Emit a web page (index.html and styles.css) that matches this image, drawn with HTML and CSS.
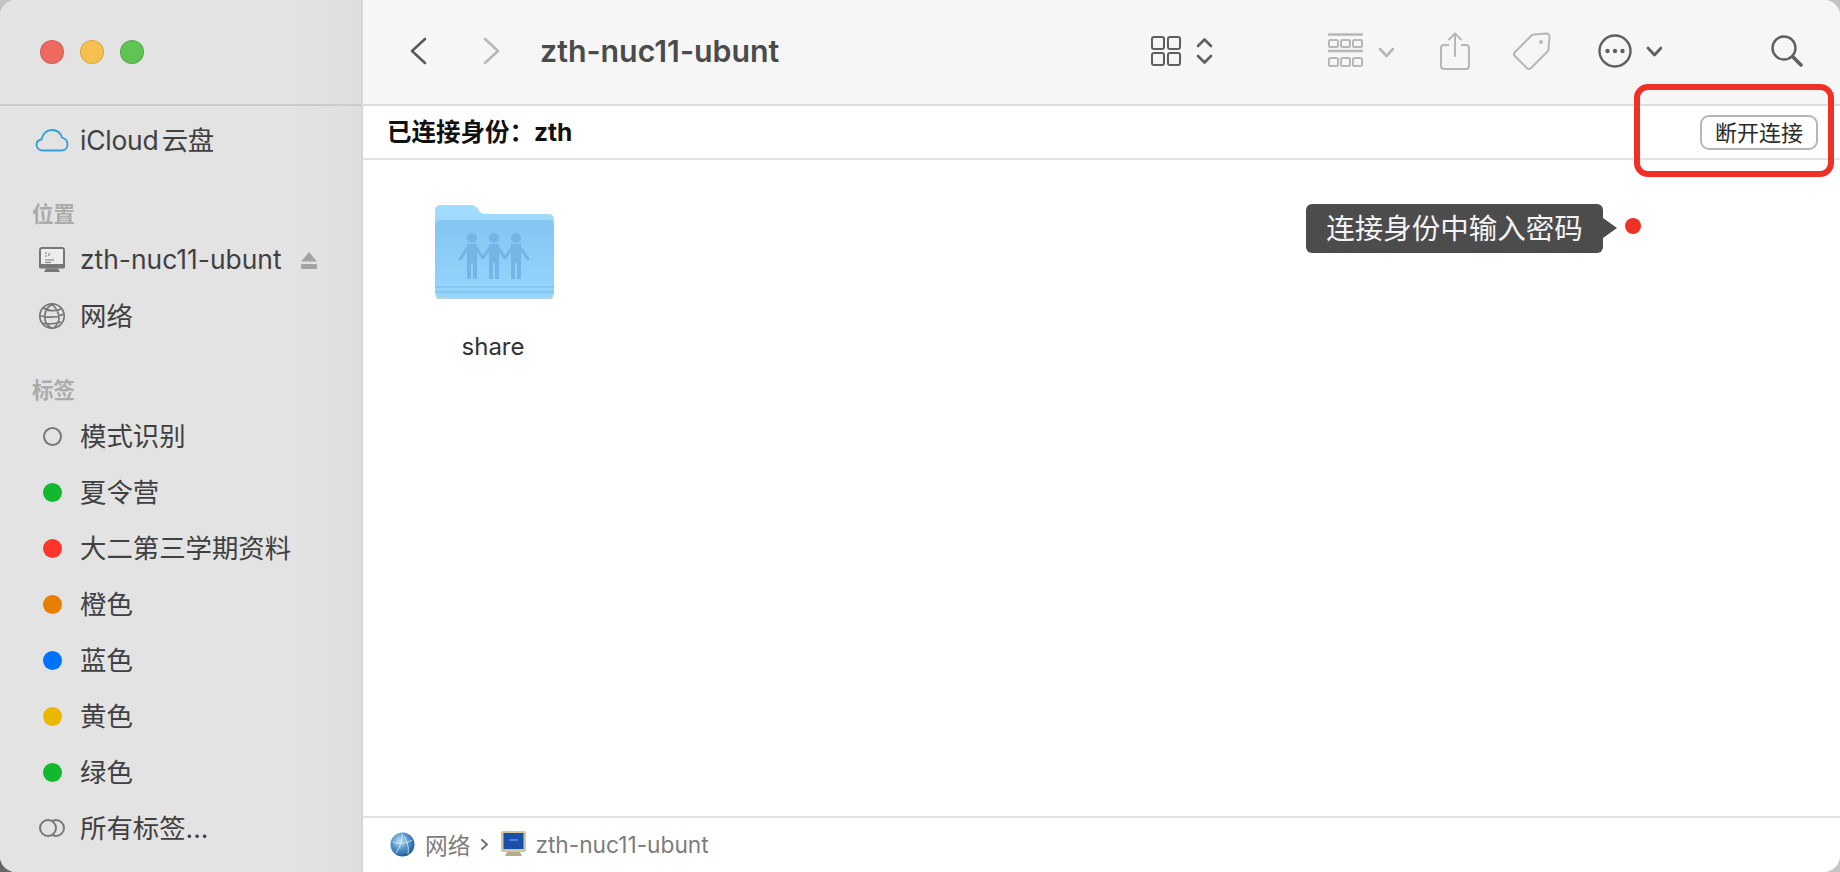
FILE: index.html
```html
<!DOCTYPE html>
<html lang="zh-CN">
<head>
<meta charset="utf-8">
<title>zth-nuc11-ubunt</title>
<link rel="stylesheet" href="styles.css">
</head>
<body>
<div class="window">
  <aside class="sidebar">
    <div class="lights">
      <span class="light red"></span>
      <span class="light yellow"></span>
      <span class="light green"></span>
    </div>
    <nav class="side-list">
      <div class="row">
        <span class="row-icon"><svg width="34" height="24" viewBox="0 0 34 24"><path d="M8 22.500C4 22.500 1.500 20 1.500 17C1.500 14 3.500 12 6.500 11.500C7.500 6 11.500 2 17 2C22 2 25.500 5 27 9.500C30.500 10.500 32.500 13 32.500 16.500C32.500 20 30 22.500 26 22.500Z" fill="none" stroke="#2f9fdc" stroke-width="1.800"/></svg></span>
        <span class="tight">iCloud 云盘</span>
      </div>
      <div class="label">位置</div>
      <div class="row">
        <span class="row-icon"><svg width="26" height="26" viewBox="0 0 26 26"><rect x="1" y="1" width="24" height="18" rx="2" fill="#fff" fill-opacity=".35" stroke="#777" stroke-width="2"/><path d="M0 17h26v3a1.500 1.500 0 0 1-1.500 1.500H1.500A1.500 1.500 0 0 1 0 20Z" fill="#777"/><path d="M7 21.500h12l2 3.500H5Z" fill="#777"/><path d="M6 6h2M6 9h2M10 6v3M6 13h9M6 15.500h6" stroke="#777" stroke-width="1" fill="none"/></svg></span>
        <span class="grow">zth-nuc11-ubunt</span>
        <svg class="eject" width="18" height="18" viewBox="0 0 18 18"><path d="M9 1L17 10.500H1Z" fill="#a3a3a3"/><rect x="1" y="13" width="16" height="5" rx="1" fill="#a3a3a3"/></svg>
      </div>
      <div class="row">
        <span class="row-icon"><svg width="28" height="28" viewBox="0 0 28 28" fill="none" stroke="#777" stroke-width="1.700"><circle cx="14" cy="14" r="12.200"/><path d="M14 2C8 6 6 12 7 18C8 22 11 25 14 26M14 2C18 6 21 11 21 16C21 20 19 23 16 26M5 5.500C9 9 18 10 24 6.500M2 13.500C8 16 18 16 26 12M4 21C9 22.500 16 22 23 20"/></svg></span>
        <span>网络</span>
      </div>
      <div class="label">标签</div>
      <div class="row"><span class="row-icon"><span class="dot hollow"></span></span><span>模式识别</span></div>
      <div class="row"><span class="row-icon"><span class="dot c-green"></span></span><span>夏令营</span></div>
      <div class="row"><span class="row-icon"><span class="dot c-red"></span></span><span>大二第三学期资料</span></div>
      <div class="row"><span class="row-icon"><span class="dot c-orange"></span></span><span>橙色</span></div>
      <div class="row"><span class="row-icon"><span class="dot c-blue"></span></span><span>蓝色</span></div>
      <div class="row"><span class="row-icon"><span class="dot c-yellow"></span></span><span>黄色</span></div>
      <div class="row"><span class="row-icon"><span class="dot c-green"></span></span><span>绿色</span></div>
      <div class="row">
        <span class="row-icon"><svg width="26" height="18" viewBox="0 0 26 18" fill="none" stroke="#777" stroke-width="2"><circle cx="17" cy="9" r="8"/><circle cx="9" cy="9" r="8" fill="#e3e3e3"/></svg></span>
        <span>所有标签...</span>
      </div>
    </nav>
  </aside>
  <main class="main">
    <header class="toolbar">
      <svg class="nav-back" width="18" height="28" viewBox="0 0 18 28" fill="none" stroke="#5a5a5a" stroke-width="2.600" stroke-linecap="round" stroke-linejoin="round"><path d="M16 2L3 14L16 26"/></svg>
      <svg class="nav-forward" width="18" height="28" viewBox="0 0 18 28" fill="none" stroke="#b8b8b8" stroke-width="2.600" stroke-linecap="round" stroke-linejoin="round"><path d="M2 2L15 14L2 26"/></svg>
      <h1 class="title">zth-nuc11-ubunt</h1>
      <div class="tools">
        <svg class="t-grid" width="62" height="30" viewBox="0 0 62 30" fill="none" stroke="#5f5f5f" stroke-width="2"><rect x="1" y="1" width="12" height="12" rx="2"/><rect x="17" y="1" width="12" height="12" rx="2"/><rect x="1" y="17" width="12" height="12" rx="2"/><rect x="17" y="17" width="12" height="12" rx="2"/><path d="M47 10L53.500 3.500L60 10M47 20L53.500 26.500L60 20" stroke-width="2.600" stroke-linecap="round" stroke-linejoin="round"/></svg>
        <svg class="t-group" width="66" height="36" viewBox="0 0 66 36" fill="none" stroke="#b7b7b7" stroke-width="2"><path d="M0 1.500h35M0 18h35" stroke-width="2.500"/><rect x="1" y="7" width="9" height="7" rx="1.500"/><rect x="13" y="7" width="9" height="7" rx="1.500"/><rect x="25" y="7" width="9" height="7" rx="1.500"/><rect x="1" y="25" width="9" height="8" rx="1.500"/><rect x="13" y="25" width="9" height="8" rx="1.500"/><rect x="25" y="25" width="9" height="8" rx="1.500"/><path d="M52 16L58.500 23L65 16" stroke-width="2.600" stroke-linecap="round" stroke-linejoin="round"/></svg>
        <svg class="t-share" width="30" height="38" viewBox="0 0 30 38" fill="none" stroke="#b7b7b7" stroke-width="2"><path d="M9 13H4a3 3 0 0 0-3 3v18a3 3 0 0 0 3 3h22a3 3 0 0 0 3-3V16a3 3 0 0 0-3-3h-5"/><path d="M15 24V2M9 7.500L15 1.500L21 7.500" stroke-linecap="round" stroke-linejoin="round"/></svg>
        <svg class="t-tag" width="38" height="38" viewBox="0 0 38 38" fill="none" stroke="#b7b7b7" stroke-width="2"><path d="M21 2.500L33 1.500C35 1.500 36.500 3 36.500 5L35.500 17C35.500 18 35 19 34 20L18 36C16.800 37.200 15 37.200 13.800 36L2 24.200C.8 23 .8 21.200 2 20L18 4C19 3 20 2.600 21 2.500Z" stroke-linejoin="round"/><circle cx="28" cy="10" r="2" fill="#b7b7b7" stroke="none"/></svg>
        <svg class="t-more" width="64" height="34" viewBox="0 0 64 34" fill="none" stroke="#5f5f5f" stroke-width="2.400"><circle cx="17" cy="17" r="15.500"/><circle cx="9.500" cy="17" r="2.200" fill="#5f5f5f" stroke="none"/><circle cx="17" cy="17" r="2.200" fill="#5f5f5f" stroke="none"/><circle cx="24.500" cy="17" r="2.200" fill="#5f5f5f" stroke="none"/><path d="M50 14L56.500 21L63 14" stroke-width="2.800" stroke-linecap="round" stroke-linejoin="round"/></svg>
        <svg class="t-search" width="32" height="32" viewBox="0 0 32 32" fill="none" stroke="#5f5f5f" stroke-width="2.400"><circle cx="13" cy="13" r="11.500"/><path d="M21.500 21.500L30 30" stroke-width="3.600" stroke-linecap="round"/></svg>
      </div>
    </header>
    <div class="infobar">
      <span class="identity">已连接身份：zth</span>
      <button class="disconnect">断开连接</button>
    </div>
    <section class="content">
      <figure class="item">
        <svg width="120" height="96" viewBox="0 0 120 96">
          <defs>
            <linearGradient id="fb" x1="0" y1="0" x2="0" y2="1"><stop offset="0" stop-color="#82c6f2"/><stop offset="1" stop-color="#95d6fc"/></linearGradient>
            <linearGradient id="ft" x1="0" y1="0" x2="0" y2="1"><stop offset="0" stop-color="#a2dcfe"/><stop offset="1" stop-color="#8bcdf6"/></linearGradient>
          </defs>
          <rect x="1" y="90" width="117" height="4" rx="2" fill="#b9cfdf"/>
          <path d="M5 92a5 5 0 0 1-5-5V5a5 5 0 0 1 5-5h30c4 0 6 1.500 8 4c2 4 4 5 8 5h63a5 5 0 0 1 5 5v73a5 5 0 0 1-5 5Z" fill="url(#ft)"/>
          <path d="M6 15h108a5 5 0 0 1 5 5v67a5 5 0 0 1-5 5H5a5 5 0 0 1-5-5V21a6 6 0 0 1 6-6Z" fill="url(#fb)"/>
          <path d="M0 82h119M0 87h119" stroke="#80c4f0" stroke-width="1.500"/>
          <g fill="#73b5e6" stroke="none">
            <circle cx="37" cy="33" r="5"/><circle cx="59" cy="33" r="5"/><circle cx="81" cy="33" r="5"/>
            <path d="M32 39h10v35h-4v-16h-2v16h-4Z"/>
            <path d="M54 39h10v35h-4v-16h-2v16h-4Z"/>
            <path d="M76 39h10v35h-4v-16h-2v16h-4Z"/>
          </g>
          <path d="M34 41L25 54M40 41L48 53L56 41M62 41L70 53L78 41M84 41L93 54" fill="none" stroke="#73b5e6" stroke-width="3" stroke-linecap="round" stroke-linejoin="round"/>
        </svg>
        <figcaption class="item-name">share</figcaption>
      </figure>
      <div class="tooltip">连接身份中输入密码</div>
      <span class="pin"></span>
      <div class="highlight"></div>
    </section>
    <footer class="pathbar">
      <svg width="25" height="25" viewBox="0 0 25 25">
        <defs><radialGradient id="gl" cx=".4" cy=".35" r=".7"><stop offset="0" stop-color="#bfe2f7"/><stop offset=".55" stop-color="#4c8fc9"/><stop offset="1" stop-color="#1d5590"/></radialGradient></defs>
        <circle cx="12.500" cy="12.500" r="12" fill="url(#gl)"/>
        <path d="M3 10C8 12 16 12 22 8M6 21C10 15 13 8 12 2M14 4C17 9 19 14 18 22" fill="none" stroke="#e4f3fc" stroke-width="1" stroke-opacity=".8"/>
      </svg>
      <span>网络</span>
      <svg class="sep" width="9" height="13" viewBox="0 0 9 13" fill="none" stroke="#777" stroke-width="2.200" stroke-linecap="round" stroke-linejoin="round"><path d="M2 2L7 6.500L2 11"/></svg>
      <svg class="monitor" width="25" height="26" viewBox="0 0 25 26">
        <rect x="0" y="0" width="25" height="21" rx="2" fill="#cfc7a4"/>
        <rect x="2.500" y="2" width="20" height="16" fill="#1b4ea8"/>
        <path d="M8 9h9" stroke="#8fb0e6" stroke-width="1"/>
        <path d="M6 21h13l2 4H4Z" fill="#b5ad8a"/>
      </svg>
      <span>zth-nuc11-ubunt</span>
    </footer>
  </main>
</div>
</body>
</html>
```

FILE: styles.css
```css
* { box-sizing: border-box; }
html, body { margin: 0; height: 100%; overflow: hidden; }
body {
  background: linear-gradient(45deg, #666 30px, #c4c4c4 30px);
  font-family: "Inter", "Noto Sans CJK SC", sans-serif;
  color: #3f3f3f;
}

.window {
  width: 1840px;
  height: 872px;
  display: grid;
  grid-template-columns: 363px 1fr;
  background: #fff;
  border-radius: 16px;
  overflow: hidden;
}

.sidebar {
  background: linear-gradient(90deg, #e3e3e3 82%, #e1dfe1 96%, #dfdddf 100%);
  border-right: 2px solid #d6d6d6;
  display: flex;
  flex-direction: column;
}
.lights {
  height: 106px;
  padding: 40px 0 0 40px;
  display: flex;
  gap: 16px;
  border-bottom: 2px solid #cbcbcb;
}
.light { width: 24px; height: 24px; border-radius: 50%; border: 1px solid rgba(0,0,0,.12); }
.red { background: #ee6a5f; }
.yellow { background: #f6c04f; }
.green { background: #5fc453; }

.side-list { padding-top: 6px; }
.row {
  height: 56px;
  display: flex;
  align-items: center;
  padding-right: 43px;
  font-size: 26.400px;
  color: #404040;
}
.row > span:not(.row-icon) { margin-bottom: 3px; }
.row-icon {
  width: 80px;
  padding-left: 24px;
  flex: none;
  display: flex;
  justify-content: center;
  align-items: center;
}
.tight { word-spacing: -4px; letter-spacing: -.2px; }
.grow { flex: 1; }
.label {
  height: 30px;
  margin: 31px 0 3px 32px;
  font-size: 21.500px;
  line-height: 30px;
  font-weight: 700;
  color: #ababab;
}
.dot { width: 19px; height: 19px; border-radius: 50%; display: block; }
.hollow { border: 2px solid #777; }
.c-green { background: #12b92f; }
.c-red { background: #fe352c; }
.c-orange { background: #e87e00; }
.c-blue { background: #0073fb; }
.c-yellow { background: #ecb700; }

.main { display: flex; flex-direction: column; min-width: 0; }
.toolbar {
  height: 106px;
  background: #f6f6f6;
  border-bottom: 2px solid #dcdcdc;
  display: flex;
  align-items: center;
  padding: 0 0 2px 46px;
  flex: none;
}
.nav-forward { margin-left: 56px; }
.title {
  margin: 0 0 0 39px;
  font-size: 30.300px;
  font-weight: 600;
  color: #4b4b4b;
  width: 611px;
  flex: none;
  white-space: nowrap;
}
.tools { display: flex; align-items: center; flex: 1; }
.t-group { margin-left: 115px; }
.t-share { margin-left: 46px; }
.t-tag { margin-left: 43px; }
.t-more { margin-left: 47px; }
.t-search { margin-left: 109px; }

.infobar {
  height: 54px;
  flex: none;
  border-bottom: 2px solid #e3e3e3;
  display: flex;
  align-items: center;
  justify-content: space-between;
  padding: 0 22px 0 24px;
}
.identity { font-size: 24.500px; font-weight: 700; color: #111; margin-bottom: 4px; }
.disconnect {
  width: 118px;
  height: 35px;
  padding: 0 0 3px;
  background: #fff;
  border: 2px solid #b6b6b6;
  border-radius: 9px;
  font: 400 22px/1 "Noto Sans CJK SC", sans-serif;
  color: #2b2b2b;
}

.content {
  flex: 1;
  position: relative;
  padding: 45px 0 0 72px;
}
.item { margin: 0; width: 120px; display: flex; flex-direction: column; align-items: center; }
.item-name { margin: 31px 4px 0 0; font-size: 24px; color: #333; }

.tooltip {
  position: absolute;
  left: 943px;
  top: 44px;
  width: 297px;
  height: 49px;
  border-radius: 6px;
  background: #4c4c4c;
  color: #f4f4f4;
  font: 400 28.500px/45px "Noto Sans CJK SC", sans-serif;
  text-align: center;
}
.tooltip::after {
  content: "";
  position: absolute;
  left: 100%;
  top: 14px;
  border-left: 14px solid #4c4c4c;
  border-top: 10px solid transparent;
  border-bottom: 10px solid transparent;
}
.pin {
  position: absolute;
  left: 1262px;
  top: 58px;
  width: 16px;
  height: 16px;
  border-radius: 50%;
  background: #ee3124;
}
.highlight {
  position: absolute;
  left: 1271px;
  top: -76px;
  width: 200px;
  height: 93px;
  border: 6px solid #ee3124;
  border-radius: 14px;
}

.pathbar {
  height: 56px;
  flex: none;
  border-top: 2px solid #e3e3e3;
  display: flex;
  align-items: center;
  padding: 0 0 2px 27px;
  font-size: 22.700px;
  color: #7c7c7c;
  gap: 10px;
}
.sep { margin-right: 2px; }
.monitor { margin-right: -1px; }
```
